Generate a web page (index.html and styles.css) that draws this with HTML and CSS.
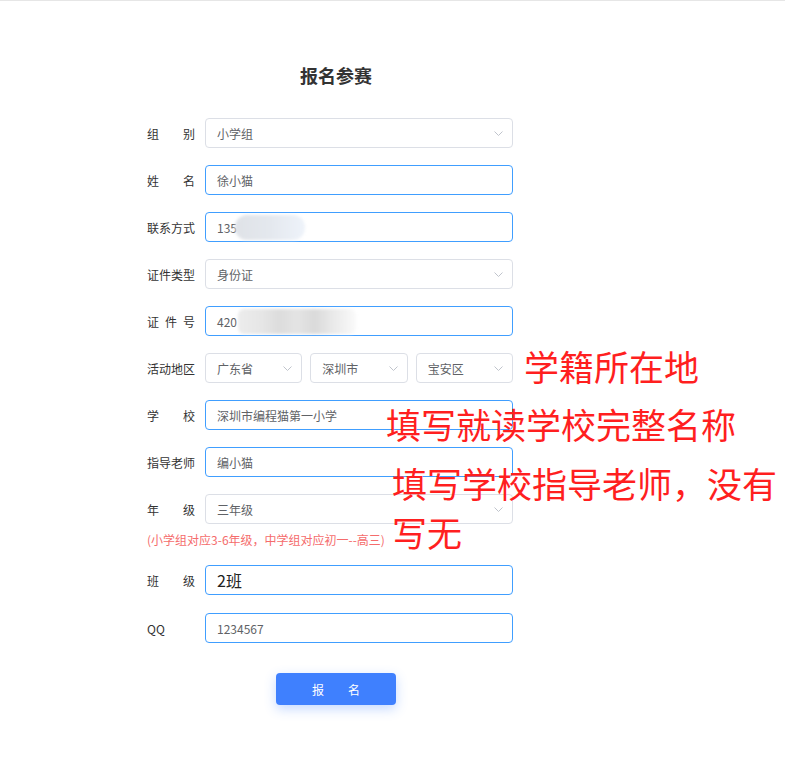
FILE: index.html
```html
<!DOCTYPE html>
<html lang="zh-CN">
<head>
    <meta charset="UTF-8">
    <meta name="viewport" content="width=device-width, initial-scale=1.0">
    <title>报名参赛</title>
    <link rel="stylesheet" href="styles.css">
</head>
<body>
    <div class="page">
        <div class="signup">
            <h1 class="title">报名参赛</h1>

            <div class="form-row">
                <label class="label">组别</label>
                <div class="field select">
                    <span>小学组</span>
                    <svg class="arrow" width="9" height="5" viewBox="0 0 9 5"><path d="M0.5 0.5 L4.5 4.5 L8.5 0.5" fill="none" stroke="#c0c4cc" stroke-width="1"/></svg>
                </div>
            </div>

            <div class="form-row">
                <label class="label">姓名</label>
                <div class="field active"><span>徐小猫</span></div>
            </div>

            <div class="form-row">
                <label class="label">联系方式</label>
                <div class="field active"><span>135</span><span class="blur blur-phone"></span></div>
            </div>

            <div class="form-row">
                <label class="label">证件类型</label>
                <div class="field select">
                    <span>身份证</span>
                    <svg class="arrow" width="9" height="5" viewBox="0 0 9 5"><path d="M0.5 0.5 L4.5 4.5 L8.5 0.5" fill="none" stroke="#c0c4cc" stroke-width="1"/></svg>
                </div>
            </div>

            <div class="form-row">
                <label class="label">证件号</label>
                <div class="field active"><span>420</span><span class="blur blur-id"></span></div>
            </div>

            <div class="form-row">
                <label class="label">活动地区</label>
                <div class="area">
                    <div class="field select">
                        <span>广东省</span>
                        <svg class="arrow" width="9" height="5" viewBox="0 0 9 5"><path d="M0.5 0.5 L4.5 4.5 L8.5 0.5" fill="none" stroke="#c0c4cc" stroke-width="1"/></svg>
                    </div>
                    <div class="field select">
                        <span>深圳市</span>
                        <svg class="arrow" width="9" height="5" viewBox="0 0 9 5"><path d="M0.5 0.5 L4.5 4.5 L8.5 0.5" fill="none" stroke="#c0c4cc" stroke-width="1"/></svg>
                    </div>
                    <div class="field select">
                        <span>宝安区</span>
                        <svg class="arrow" width="9" height="5" viewBox="0 0 9 5"><path d="M0.5 0.5 L4.5 4.5 L8.5 0.5" fill="none" stroke="#c0c4cc" stroke-width="1"/></svg>
                    </div>
                </div>
            </div>

            <div class="form-row">
                <label class="label">学校</label>
                <div class="field active"><span>深圳市编程猫第一小学</span></div>
            </div>

            <div class="form-row">
                <label class="label">指导老师</label>
                <div class="field active"><span>编小猫</span></div>
            </div>

            <div class="form-row">
                <label class="label">年级</label>
                <div class="field select">
                    <span>三年级</span>
                    <svg class="arrow" width="9" height="5" viewBox="0 0 9 5"><path d="M0.5 0.5 L4.5 4.5 L8.5 0.5" fill="none" stroke="#c0c4cc" stroke-width="1"/></svg>
                </div>
            </div>
            <p class="hint">(小学组对应3-6年级，中学组对应初一--高三)</p>

            <div class="form-row">
                <label class="label">班级</label>
                <div class="field active"><span class="big">2班</span></div>
            </div>

            <div class="form-row last">
                <label class="label plain">QQ</label>
                <div class="field active"><span>1234567</span></div>
            </div>

            <div class="actions">
                <button class="submit">报　　名</button>
            </div>
        </div>

        <!-- red notes written over the screenshot -->
        <div class="note note-area">学籍所在地</div>
        <div class="note note-school">填写就读学校完整名称</div>
        <div class="note note-teacher">填写学校指导老师，没有写无</div>
    </div>
</body>
</html>
```

FILE: styles.css
```css
* {
    margin: 0;
    padding: 0;
    box-sizing: border-box;
}

body {
    font-family: "Noto Sans CJK SC", "Liberation Sans", sans-serif;
    background: #fff;
    color: #333;
    width: 785px;
    height: 764px;
    overflow: hidden;
}

.page {
    position: relative;
    height: 100%;
    border-top: 1px solid #e6e6e6;
}

.signup {
    width: 378px;
    margin-left: 147px;
    padding-top: 61px;
}

.title {
    text-align: center;
    font-size: 18px;
    font-weight: bold;
    color: #333;
    line-height: 26px;
    margin-bottom: 30px;
}

.form-row {
    display: flex;
    align-items: center;
    width: 366px;
    margin-bottom: 17px;
}

.form-row.last {
    margin-top: 18px;
}

.label {
    width: 48px;
    flex-shrink: 0;
    margin-right: 10px;
    font-size: 12px;
    color: #333;
    text-align: justify;
    text-align-last: justify;
}

.label.plain {
    text-align: left;
    text-align-last: left;
}

.field {
    flex: 1;
    height: 30px;
    border: 1px solid #dcdfe6;
    border-radius: 4px;
    padding: 0 11px;
    display: flex;
    align-items: center;
    font-size: 12px;
    color: #606266;
    background: #fff;
}

.field.active {
    border-color: #409eff;
}

.select {
    justify-content: space-between;
}

.arrow {
    margin-right: -2px;
}

.area {
    flex: 1;
    display: flex;
    gap: 8px;
}

.area .field {
    flex: 1;
}

.big {
    font-size: 16px;
    color: #222;
}

.blur {
    display: inline-block;
    height: 25px;
    border-radius: 12px;
    filter: blur(1.5px);
}

.blur-phone {
    width: 70px;
    margin-left: -2px;
    background: linear-gradient(90deg, #dfe2e7 0%, #e4e8ee 50%, #eef3fa 100%);
}

.blur-id {
    width: 118px;
    margin-left: 1px;
    border-radius: 6px;
    background: linear-gradient(90deg, #ececec 0%, #e6e6e6 20%, #dcdcdc 35%, #e4e4e4 50%, #dadada 65%, #e9e9e9 80%, #fafafa 100%);
}

.hint {
    font-size: 12px;
    color: #f56c6c;
    line-height: 16px;
    margin-top: -9px;
    margin-bottom: 17px;
}

.hint + .form-row {
    margin-bottom: 0;
}

.actions {
    display: flex;
    justify-content: center;
    padding-top: 13px;
}

.submit {
    width: 120px;
    height: 32px;
    border: none;
    border-radius: 4px;
    background: #3f80fe;
    color: #fff;
    font-family: inherit;
    font-size: 12px;
    box-shadow: 0 4px 12px rgba(63, 128, 254, 0.3);
}

.note {
    position: absolute;
    color: #ff1f1f;
    font-size: 35px;
    line-height: 49px;
    white-space: nowrap;
}

.note-area {
    left: 524px;
    top: 340px;
}

.note-school {
    left: 386px;
    top: 398px;
}

.note-teacher {
    left: 392px;
    top: 457px;
    width: 390px;
    white-space: normal;
}
```
